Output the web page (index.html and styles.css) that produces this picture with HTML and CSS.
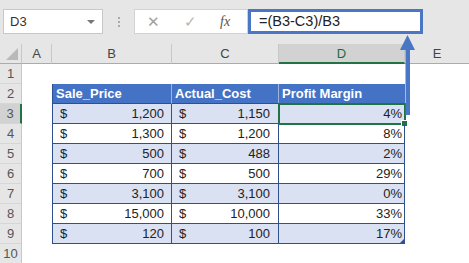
FILE: index.html
```html
<!DOCTYPE html>
<html lang="en">
<head>
    <meta charset="UTF-8">
    <title>Profit Margin</title>
    <link rel="stylesheet" href="styles.css">
</head>
<body>

    <div class="toolbar">
        <div class="name-box">
            <span>D3</span>
            <span class="caret"></span>
        </div>
        <div class="dots"><i></i><i></i><i></i></div>
        <div class="fx-box">
            <span class="fx-cancel">✕</span>
            <span class="fx-ok">✓</span>
            <span class="fx-label">fx</span>
        </div>
        <div class="formula">=(B3-C3)/B3</div>
    </div>

    <div class="sheet">
        <div class="hd corner"><span class="tri"></span></div>
        <div class="hd col">A</div>
        <div class="hd col">B</div>
        <div class="hd col">C</div>
        <div class="hd col sel">D</div>
        <div class="hd col last">E</div>

        <div class="rh">1</div>
        <div></div><div></div><div></div><div></div><div></div>

        <div class="rh">2</div>
        <div></div>
        <div class="t th first top">Sale_Price</div>
        <div class="t th top">Actual_Cost</div>
        <div class="t th top">Profit Margin</div>
        <div></div>

        <div class="rh sel">3</div>
        <div></div>
        <div class="t band first num"><span>$</span><span>1,200</span></div>
        <div class="t band num c"><span>$</span><span>1,150</span></div>
        <div class="t band pct active">4%</div>
        <div></div>

        <div class="rh">4</div>
        <div></div>
        <div class="t first num"><span>$</span><span>1,300</span></div>
        <div class="t num c"><span>$</span><span>1,200</span></div>
        <div class="t pct">8%</div>
        <div></div>

        <div class="rh">5</div>
        <div></div>
        <div class="t band first num"><span>$</span><span>500</span></div>
        <div class="t band num c"><span>$</span><span>488</span></div>
        <div class="t band pct">2%</div>
        <div></div>

        <div class="rh">6</div>
        <div></div>
        <div class="t first num"><span>$</span><span>700</span></div>
        <div class="t num c"><span>$</span><span>500</span></div>
        <div class="t pct">29%</div>
        <div></div>

        <div class="rh">7</div>
        <div></div>
        <div class="t band first num"><span>$</span><span>3,100</span></div>
        <div class="t band num c"><span>$</span><span>3,100</span></div>
        <div class="t band pct">0%</div>
        <div></div>

        <div class="rh">8</div>
        <div></div>
        <div class="t first num"><span>$</span><span>15,000</span></div>
        <div class="t num c"><span>$</span><span>10,000</span></div>
        <div class="t pct">33%</div>
        <div></div>

        <div class="rh">9</div>
        <div></div>
        <div class="t band first num"><span>$</span><span>120</span></div>
        <div class="t band num c"><span>$</span><span>100</span></div>
        <div class="t band pct end">17%</div>
        <div></div>

        <div class="rh">10</div>
        <div></div><div></div><div></div><div></div><div></div>
    </div>

    <!-- arrow from the formula bar down to the selected cell -->
    <svg class="arrow" width="20" height="84" viewBox="0 0 20 84">
        <polygon points="2,15 17,15 9.5,0" fill="#4a76c6"/>
        <rect x="7.5" y="13" width="4.5" height="67" fill="#4a76c6"/>
    </svg>

</body>
</html>
```

FILE: styles.css
```css
body {
    margin: 0;
    width: 469px;
    height: 263px;
    overflow: hidden;
    background: #ffffff;
    font-family: "Liberation Sans", Arial, sans-serif;
    font-size: 13px;
    color: #222;
    position: relative;
}

.toolbar {
    height: 44px;
    background: #e6e6e6;
    display: flex;
    align-items: flex-start;
    padding-top: 9px;
    box-sizing: border-box;
}

.name-box {
    margin-left: 3px;
    width: 100px;
    height: 25px;
    background: #fff;
    border: 1px solid #c8c8c8;
    box-sizing: border-box;
    display: flex;
    align-items: center;
    justify-content: space-between;
    padding: 0 7px 0 6px;
    color: #333;
}

.caret {
    width: 0;
    height: 0;
    border-left: 4px solid transparent;
    border-right: 4px solid transparent;
    border-top: 4px solid #777;
}

.dots {
    width: 31px;
    height: 25px;
    display: flex;
    flex-direction: column;
    align-items: center;
    justify-content: center;
    gap: 2px;
}

.dots i {
    width: 2px;
    height: 2px;
    background: #aaa;
}

.fx-box {
    width: 114px;
    height: 25px;
    background: #fff;
    border: 1px solid #d2d2d2;
    box-sizing: border-box;
    display: flex;
    align-items: center;
    padding-left: 12px;
    color: #a0a0a0;
}

.fx-cancel {
    font-size: 15px;
    width: 37px;
}

.fx-ok {
    font-size: 15px;
    width: 36px;
    color: #b4b4b4;
}

.fx-label {
    font-family: "Liberation Serif", serif;
    font-style: italic;
    font-size: 14px;
    color: #555;
}

.formula {
    width: 175px;
    height: 25px;
    border: 3px solid #4a76c6;
    background: #fff;
    box-sizing: border-box;
    font-size: 14.5px;
    line-height: 19px;
    padding-left: 8px;
    color: #222;
}

.sheet {
    display: grid;
    grid-template-columns: 22px 30px 120px 107px 126px 64px;
    grid-auto-rows: 20px;
}

.hd {
    background: #e6e6e6;
    border-right: 1px solid #c8c8c8;
    border-bottom: 1px solid #ababab;
    box-sizing: border-box;
    color: #444;
    display: flex;
    align-items: center;
    justify-content: center;
}

.hd.last {
    border-right: none;
}

.hd.sel {
    background: #d2d2d2;
    border-bottom: 2px solid #217346;
    color: #1e6b41;
}

.corner {
    align-items: flex-end;
    justify-content: flex-end;
    padding: 0 3px 3px 0;
}

.tri {
    width: 0;
    height: 0;
    border-left: 12px solid transparent;
    border-bottom: 12px solid #b9b9b9;
}

.rh {
    background: #e6e6e6;
    border-right: 1px solid #c8c8c8;
    border-bottom: 1px solid #d6d6d6;
    box-sizing: border-box;
    color: #555;
    display: flex;
    align-items: center;
    justify-content: center;
}

.rh.sel {
    background: #d2d2d2;
    border-right: 2px solid #217346;
}

.t {
    border-right: 1px solid #2f4f8f;
    border-bottom: 1px solid #2f4f8f;
    box-sizing: border-box;
    display: flex;
    align-items: center;
    position: relative;
}

.t.first {
    border-left: 1px solid #2f4f8f;
}

.th {
    background: #4472c4;
    color: #fff;
    font-weight: bold;
    padding-left: 3px;
    border-right-color: #9db3df;
    border-bottom-color: #2f4f8f;
}

.th + .th + .th {
    border-right-color: #4472c4;
}

.band {
    background: #d9e1f2;
}

.num {
    justify-content: space-between;
    padding: 0 7px;
}

.num.c {
    padding: 0 8px 0 7px;
}

.pct {
    justify-content: flex-end;
    padding-right: 2px;
}

.active {
    outline: 2px solid #217346;
    outline-offset: -1px;
}

.active::after {
    content: "";
    position: absolute;
    right: -4px;
    bottom: -4px;
    width: 5px;
    height: 5px;
    background: #217346;
    border: 1px solid #fff;
}

.end::after {
    content: "";
    position: absolute;
    right: 0;
    bottom: 0;
    border-left: 4px solid transparent;
    border-bottom: 4px solid #2f4f8f;
}

.arrow {
    position: absolute;
    left: 398px;
    top: 35px;
}
```
